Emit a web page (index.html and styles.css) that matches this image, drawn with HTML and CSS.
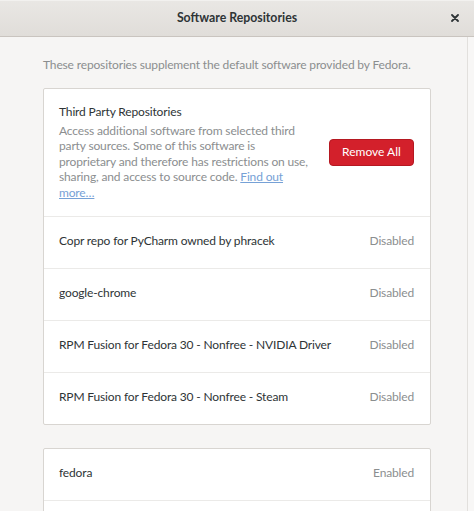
FILE: index.html
```html
<!DOCTYPE html>
<html>
<head>
<meta charset="utf-8">
<link rel="stylesheet" href="styles.css">
</head>
<body>
<div class="window">
  <header class="titlebar">
    <span class="title">Software Repositories</span>
    <span class="close">
      <svg width="8" height="8" viewBox="0 0 8 8"><path d="M1 1L7 7M7 1L1 7" stroke="#2e3436" stroke-width="1.8" stroke-linecap="round"/></svg>
    </span>
  </header>
  <div class="body">
    <main class="content">
      <p class="intro">These repositories supplement the default software provided by Fedora.</p>
      <section class="card">
        <div class="third">
          <div class="third-text">
            <div class="third-title">Third Party Repositories</div>
            <div class="third-desc">Access additional software from selected third party sources. Some of this software is proprietary and therefore has restrictions on use, sharing, and access to source code. <a class="link" href="#">Find out more…</a></div>
          </div>
          <button class="remove">Remove All</button>
        </div>
        <div class="row"><span class="name">Copr repo for PyCharm owned by phracek</span><span class="state">Disabled</span></div>
        <div class="row"><span class="name">google-chrome</span><span class="state">Disabled</span></div>
        <div class="row"><span class="name">RPM Fusion for Fedora 30 - Nonfree - NVIDIA Driver</span><span class="state">Disabled</span></div>
        <div class="row"><span class="name">RPM Fusion for Fedora 30 - Nonfree - Steam</span><span class="state">Disabled</span></div>
      </section>
      <section class="card card2">
        <div class="row"><span class="name">fedora</span><span class="state">Enabled</span></div>
        <div class="row"></div>
      </section>
    </main>
    <div class="scroll-strip"></div>
  </div>
</div>
</body>
</html>
```
FILE: styles.css
```css
html, body {
  margin: 0;
  padding: 0;
  height: 100%;
  overflow: hidden;
}
body {
  font-family: "Lato", "Noto Sans", sans-serif;
  font-size: 12px;
  letter-spacing: -0.15px;
  color: #2e3436;
  background: #f6f5f4;
}
.window {
  height: 511px;
  display: flex;
  flex-direction: column;
}
.titlebar {
  flex: 0 0 37px;
  box-sizing: border-box;
  height: 37px;
  display: flex;
  align-items: center;
  justify-content: center;
  position: relative;
  padding-bottom: 2px;
  background: linear-gradient(#e9e7e4, #e0ddd9);
  border-top: 1px solid #f2f1ef;
  border-bottom: 1px solid #c9c4bf;
}
.title {
  font-weight: bold;
  font-size: 12.3px;
  letter-spacing: 0;
  color: #2e3436;
}
.close {
  position: absolute;
  right: 15px;
  top: 13px;
  width: 8px;
  height: 8px;
  display: flex;
}
.body {
  flex: 1;
  display: flex;
  overflow: hidden;
}
.content {
  flex: 1;
  padding: 0 36px 0 43px;
  overflow: hidden;
  border-right: 1px solid #e2e0dd;
}
.scroll-strip {
  flex: 0 0 6px;
  background: #f8f7f6;
}
.intro {
  margin: 20px 0 15px 0;
  color: #8b8e8f;
  line-height: 16px;
  white-space: nowrap;
}
.card {
  background: #ffffff;
  border: 1px solid #d8d5d1;
  border-radius: 2px;
}
.card2 {
  margin-top: 23px;
}
.third {
  box-sizing: border-box;
  height: 128px;
  display: flex;
  align-items: center;
  padding: 15px 16px 16px 15px;
  border-bottom: 1px solid #ebeae8;
}
.third-text {
  width: 254px;
  flex: 0 0 254px;
}
.third-title {
  line-height: 16px;
  margin-bottom: 3px;
}
.third-desc {
  color: #8b8e8f;
  line-height: 15.4px;
}
.link {
  color: #76a1d6;
  text-decoration: underline;
}
.remove {
  margin-left: auto;
  width: 85px;
  height: 27px;
  background: #d3202b;
  color: #ffffff;
  border: 1px solid #b51821;
  border-radius: 4px;
  font-family: inherit;
  font-size: 12px;
  letter-spacing: 0;
  padding: 0 0 1px 0;
}
.row {
  box-sizing: border-box;
  height: 52px;
  display: flex;
  align-items: center;
  justify-content: space-between;
  padding: 0 16px 4px 15px;
  border-bottom: 1px solid #ebeae8;
}
.row:last-child {
  border-bottom: none;
  height: 51px;
}
.state {
  color: #8b8e8f;
}
```
